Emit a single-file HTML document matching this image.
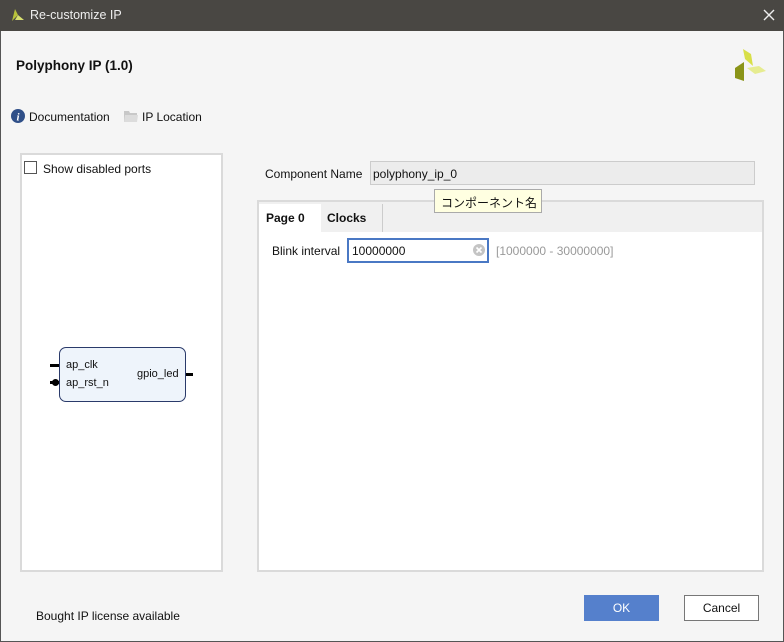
<!DOCTYPE html>
<html><head><style>
*{margin:0;padding:0;box-sizing:border-box}
body{width:784px;height:642px;overflow:hidden;font-family:"Liberation Sans","Noto Sans CJK JP",sans-serif;font-size:12px;color:#111;background:#f5f5f5;position:relative}
.a{position:absolute;white-space:nowrap}
</style></head><body>
<div class="a" style="left:0;top:0;width:784px;height:642px;border:1px solid #555;border-top:none;background:#f5f5f5"></div>
<div class="a" style="left:0;top:0;width:784px;height:31px;background:#494743"></div>
<svg class="a" style="left:9px;top:8px" width="16" height="14" viewBox="0 0 16 14"><path d="M6 1 L9 7 L3 13 Z" fill="#b8c23a"/><path d="M9 7 L15 12 L6 12 Z" fill="#d8e070"/></svg>
<div class="a" style="left:30px;top:8px;color:#eee;font-size:12.5px">Re-customize IP</div>
<svg class="a" style="left:763px;top:9px" width="12" height="12"><path d="M1 1L11 11M11 1L1 11" stroke="#eee" stroke-width="1.4"/></svg>
<div class="a" style="left:16px;top:58px;font-weight:bold;font-size:13.5px">Polyphony IP (1.0)</div>
<svg class="a" style="left:734px;top:48px" width="34" height="34" viewBox="0 0 34 34"><path d="M9 1 L17 6 L19 18 L11 11Z" fill="#d8df48"/><path d="M13 20 L25 18 L32 23 L21 26Z" fill="#e6ec90"/><path d="M10 14 L10 33 L1 30 L1 20Z" fill="#8a9418"/></svg>
<svg class="a" style="left:11px;top:109px" width="14" height="14"><circle cx="7" cy="7" r="7" fill="#2f4f88"/><text x="7" y="11.5" font-size="11" font-weight="bold" font-style="italic" fill="#fff" text-anchor="middle" font-family="Liberation Serif">i</text></svg>
<div class="a" style="left:29px;top:110px">Documentation</div>
<svg class="a" style="left:124px;top:110px" width="14" height="12"><path d="M0 1h5l1 2h7v9H0z" fill="#c8c8c8"/><path d="M1 5h13l-1 7H0z" fill="#dcdcdc"/></svg>
<div class="a" style="left:142px;top:110px">IP Location</div>
<div class="a" style="left:20px;top:153px;width:203px;height:419px;border:2px solid #dadada;background:#fff"></div>
<div class="a" style="left:24px;top:161px;width:13px;height:13px;border:1px solid #555;background:#fff"></div>
<div class="a" style="left:43px;top:162px">Show disabled ports</div>
<div class="a" style="left:59px;top:347px;width:127px;height:55px;border:1px solid #2a3a6a;border-radius:7px;background:#eef4fb"></div>
<div class="a" style="left:50px;top:364px;width:9px;height:3px;background:#000"></div>
<div class="a" style="left:50px;top:381px;width:9px;height:3px;background:#000"></div>
<div class="a" style="left:52px;top:379px;width:7px;height:7px;border-radius:50%;background:#000"></div>
<div class="a" style="left:186px;top:373px;width:7px;height:3px;background:#000"></div>
<div class="a" style="left:66px;top:359px;font-size:11px">ap_clk</div>
<div class="a" style="left:66px;top:377px;font-size:11px">ap_rst_n</div>
<div class="a" style="left:137px;top:368px;font-size:11px">gpio_led</div>
<div class="a" style="left:265px;top:167px">Component Name</div>
<div class="a" style="left:370px;top:161px;width:385px;height:24px;border:1px solid #ccc;background:#ececec;padding:5px 2px">polyphony_ip_0</div>
<div class="a" style="left:257px;top:200px;width:507px;height:372px;border:2px solid #dadada;background:#f0f0f0"></div>
<div class="a" style="left:259px;top:232px;width:503px;height:338px;background:#fff"></div>
<div class="a" style="left:259px;top:204px;width:62px;height:29px;background:#fff;font-weight:bold;padding:7px 7px">Page 0</div>
<div class="a" style="left:321px;top:204px;width:62px;height:28px;border-right:1px solid #ccc;font-weight:bold;padding:7px 6px">Clocks</div>
<div class="a" style="left:434px;top:189px;width:108px;height:24px;border:1px solid #aaa;background:#ffffe1;padding:4px 0 0 6px;font-size:12px;overflow:hidden">コンポーネント名</div>
<div class="a" style="left:272px;top:244px">Blink interval</div>
<div class="a" style="left:347px;top:238px;width:142px;height:25px;border:2px solid #4a78c4;background:#fff;padding:4px 3px">10000000</div>
<svg class="a" style="left:473px;top:244px" width="12" height="12"><circle cx="6" cy="6" r="6" fill="#c4c4c4"/><path d="M3.5 3.5l5 5M8.5 3.5l-5 5" stroke="#fff" stroke-width="1.6"/></svg>
<div class="a" style="left:496px;top:244px;color:#999">[1000000 - 30000000]</div>
<div class="a" style="left:36px;top:609px">Bought IP license available</div>
<div class="a" style="left:584px;top:595px;width:75px;height:26px;background:#5580cc;color:#fff;text-align:center;line-height:26px">OK</div>
<div class="a" style="left:684px;top:595px;width:75px;height:26px;background:#fff;border:1px solid #777;text-align:center;line-height:24px">Cancel</div>
</body></html>
